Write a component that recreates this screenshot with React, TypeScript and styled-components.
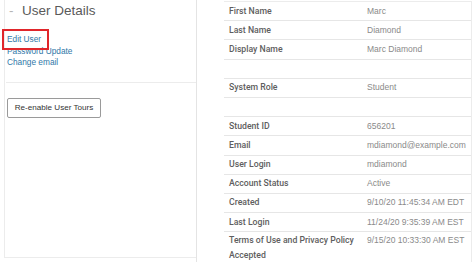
import React, { FC } from 'react'
import styled, { createGlobalStyle } from 'styled-components'

const GlobalStyle = createGlobalStyle`
    html, body {
        margin: 0;
        padding: 0;
        background: #ffffff;
        font-family: "Liberation Sans", Arial, sans-serif;
    }
`

const Page = styled.div({
    display: 'flex',
    width: '474px',
    height: '262px',
    overflow: 'hidden',
    background: '#ffffff'
})

const Sidebar = styled.div({
    width: '192px',
    height: '258px',
    marginLeft: '4px',
    borderLeft: '1px solid #ececec',
    borderBottom: '1px solid #ececec',
    boxSizing: 'border-box',
    display: 'flex',
    flexDirection: 'column'
})

const Heading = styled.div`
    display: flex;
    align-items: center;
    height: 20px;
    padding-left: 4px;
    font-size: 13.5px;
    color: #5a5a5a;
`

const Dash = styled.span`
    color: #b5b5b5;
    width: 13px;
`

const Links = styled.div`
    display: flex;
    flex-direction: column;
    margin-top: 14px;
    padding-left: 1px;
    padding-bottom: 14px;
    border-bottom: 1px solid #ececec;
    margin-left: 1px;
`

const LinkItem = styled.a<{ $highlight?: boolean }>`
    align-self: flex-start;
    font-size: 8.3px;
    line-height: 11px;
    color: #2f78a8;
    text-decoration: none;
    padding: ${p => (p.$highlight ? '3px 6px 3px 3px' : '0')};
    margin: ${p => (p.$highlight ? '-5px 0 -4px -5px' : '0')};
    border: ${p => (p.$highlight ? '2px solid #e0262b' : 'none')};
    position: relative;
    z-index: ${p => (p.$highlight ? 1 : 0)};
`

const ToolRow = styled.div`
    padding: 13px 0 0 2px;
`

const Button = styled.button`
    height: 20px;
    width: 94px;
    padding: 0;
    font-family: "Liberation Sans", Arial, sans-serif;
    font-size: 8.1px;
    color: #333333;
    background: #ffffff;
    border: 1px solid #9a9a9a;
    border-radius: 2px;
`

const Main = styled.div({
    flex: 1,
    borderLeft: '1px solid #e4e4e4',
    padding: '1px 2px 0 27px',
    boxSizing: 'border-box'
})

const Table = styled.div`
    border-top: 1px solid #ececec;
    border-right: 1px solid #ececec;
`

const Row = styled.div<{ $tall?: boolean }>`
    display: grid;
    grid-template-columns: 143px 1fr;
    align-items: ${p => (p.$tall ? 'start' : 'center')};
    height: ${p => (p.$tall ? '34px' : '18.2px')};
    padding-top: ${p => (p.$tall ? '1px' : '0')};
    border-bottom: 1px solid #e6e6e6;
    font-size: 8.5px;
    line-height: 15px;
`

const Label = styled.div`
    padding-left: 5px;
    padding-right: 4px;
    font-family: Roboto, "Liberation Sans", Arial, sans-serif;
    font-size: 8.7px;
    font-weight: 500;
    color: #5e5e5e;
`

const Value = styled.div`
    color: #8a8a8a;
`

const rows: Array<[string, string] | null> = [
    ['First Name', 'Marc'],
    ['Last Name', 'Diamond'],
    ['Display Name', 'Marc Diamond'],
    null,
    ['System Role', 'Student'],
    null,
    ['Student ID', '656201'],
    ['Email', 'mdiamond@example.com'],
    ['User Login', 'mdiamond'],
    ['Account Status', 'Active'],
    ['Created', '9/10/20 11:45:34 AM EDT'],
    ['Last Login', '11/24/20 9:35:39 AM EST'],
    ['Terms of Use and Privacy Policy Accepted', '9/15/20 10:33:30 AM EST']
]

const App: FC = () => {
    return (
        <Page>
            <GlobalStyle />
            <Sidebar>
                <Heading>
                    <Dash>-</Dash>User Details
                </Heading>
                <Links>
                    <LinkItem $highlight href='#'>Edit User</LinkItem>
                    <LinkItem href='#'>Password Update</LinkItem>
                    <LinkItem href='#'>Change email</LinkItem>
                </Links>
                <ToolRow>
                    <Button>Re-enable User Tours</Button>
                </ToolRow>
            </Sidebar>
            <Main>
                <Table>
                    { rows.map((row, i) => row
                        ? (
                            <Row key={ i } $tall={ row[0].length > 30 }>
                                <Label>{ row[0] }</Label>
                                <Value>{ row[1] }</Value>
                            </Row>
                        )
                        : <Row key={ i } />
                    ) }
                </Table>
            </Main>
        </Page>
    )
}

export default App
